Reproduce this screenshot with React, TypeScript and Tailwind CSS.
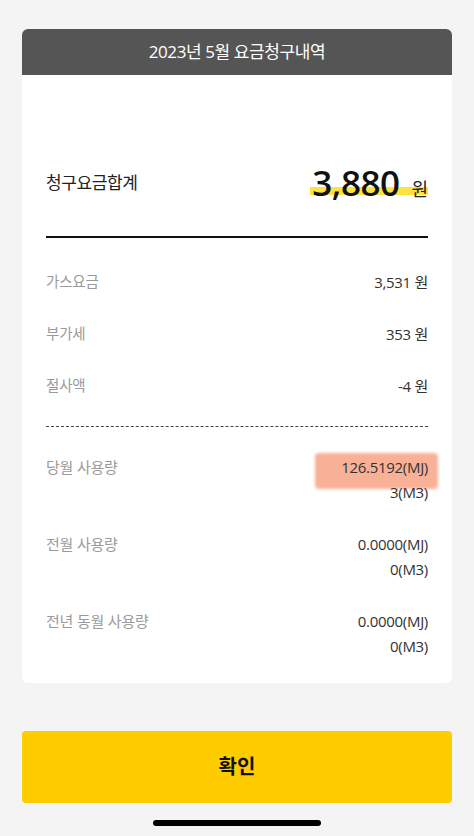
import React from 'react';

const font = { fontFamily: '"Open Sans", "Noto Sans CJK KR", sans-serif' };

interface ChargeRow {
  label: string;
  value: string;
}

interface UsageRow {
  label: string;
  mj: string;
  m3: string;
  highlight?: boolean;
}

const charges: ChargeRow[] = [
  { label: '가스요금', value: '3,531 원' },
  { label: '부가세', value: '353 원' },
  { label: '절사액', value: '-4 원' },
];

const usages: UsageRow[] = [
  { label: '당월 사용량', mj: '126.5192(MJ)', m3: '3(M3)', highlight: true },
  { label: '전월 사용량', mj: '0.0000(MJ)', m3: '0(M3)' },
  { label: '전년 동월 사용량', mj: '0.0000(MJ)', m3: '0(M3)' },
];

const App: React.FC = () => {
  return (
    <div
      className="min-h-[836px] w-full bg-[#f4f4f4] flex flex-col items-center pt-[29px]"
      style={font}
    >
      {/* Bill card */}
      <div className="w-[430px] rounded-[6px] bg-white overflow-hidden">
        <div className="h-[46px] bg-[#555555] flex items-center justify-center">
          <span className="text-white text-[17px] tracking-[-0.4px]">2023년 5월 요금청구내역</span>
        </div>

        <div className="px-6">
          {/* Total */}
          <div className="pt-[88px] pb-[33px] flex items-center justify-between">
            <span className="text-[17px] text-[#222] tracking-[-0.4px]">청구요금합계</span>
            <div className="relative flex items-baseline h-[40px]">
              <div className="absolute left-[-2px] right-0 top-[24px] h-[8px] bg-[#ffe23d]" />
              <span className="relative text-[35px] leading-[40px] font-semibold text-[#111] tracking-[-0.5px]">3,880</span>
              <span className="relative ml-[12px] text-[18px] text-[#222]">원</span>
            </div>
          </div>
          <div className="h-[2px] bg-[#111]" />

          {/* Charges */}
          <div className="pt-[18px] pb-[14px]">
            {charges.map((row) => (
              <div key={row.label} className="h-[52px] flex items-center justify-between text-[15px]">
                <span className="text-[#9a9a9a] text-[14.5px] tracking-[-0.2px]">{row.label}</span>
                <span className="text-[#333] tracking-[-0.3px]">{row.value}</span>
              </div>
            ))}
          </div>
          <div className="border-t border-dashed border-[#444]" />

          {/* Usage */}
          <div className="pb-[24px]">
            {usages.map((row, i) => (
              <div
                key={row.label}
                className={`flex justify-between leading-[25px] ${i === 0 ? 'mt-[28px]' : 'mt-[27px]'}`}
              >
                <span className="text-[#9a9a9a] text-[15px] tracking-[-0.2px]">{row.label}</span>
                <div className="relative flex flex-col items-end text-[15px] text-[#333] tracking-[-0.3px]">
                  {row.highlight && (
                    <div className="absolute right-[-10px] top-[-2px] w-[123px] h-[36px] rounded-[4px] bg-[#f8b197] blur-[1.5px]" />
                  )}
                  <span className="relative">{row.mj}</span>
                  <span className="relative">{row.m3}</span>
                </div>
              </div>
            ))}
          </div>
        </div>
      </div>

      {/* Confirm button */}
      <button className="mt-[48px] w-[430px] h-[72px] rounded-[4px] bg-[#ffcc00] text-[20px] font-bold text-[#111] flex items-center justify-center">
        확인
      </button>

      {/* Home indicator */}
      <div className="mt-[17px] w-[168px] h-[6px] rounded-full bg-black" />
    </div>
  );
};

export default App;
